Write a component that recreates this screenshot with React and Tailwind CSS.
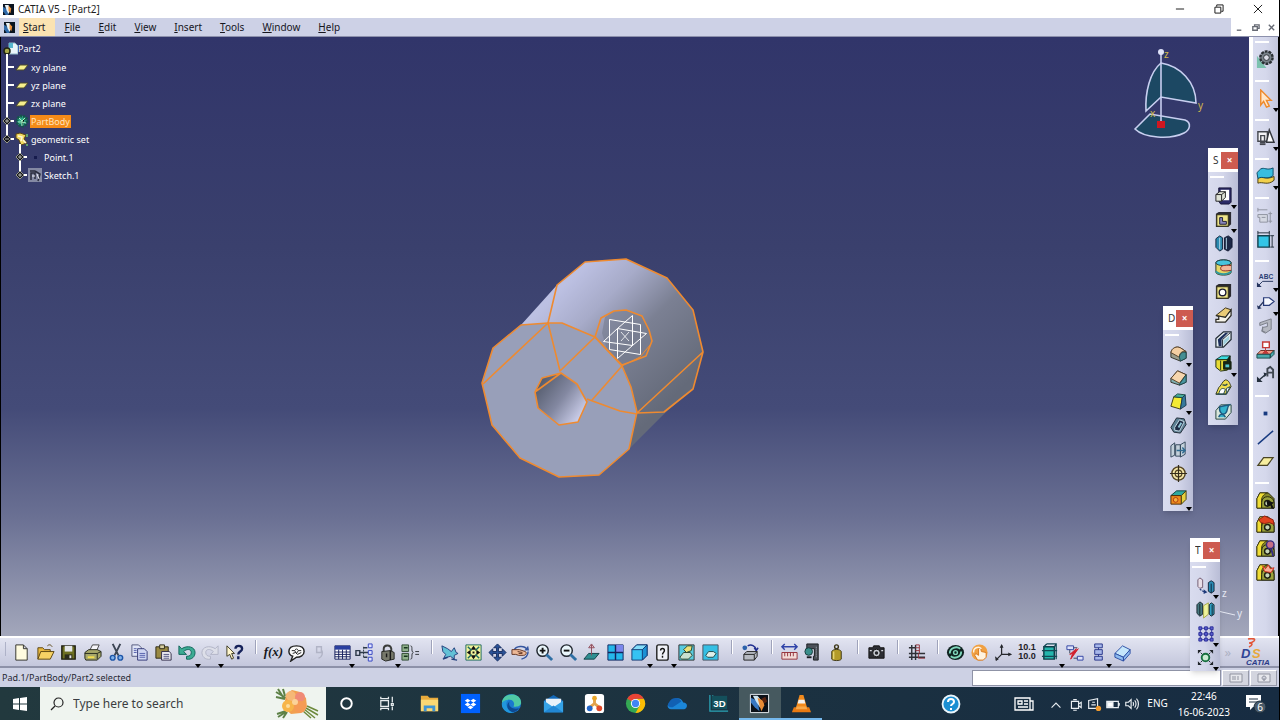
import React from "react";

// All toolbar glyphs live on a 20x20 grid
const GLYPHS = {
  newDoc: <path d="M4 2h8l4 4v12H4zM12 2v4h4" fill="#fffbe0" stroke="#33332a" />,
  open: (
    <>
      <path d="M2 17V5h5l2 2h6v3" fill="#e9b83f" stroke="#5b4310" />
      <path d="M2 17l3-8h14l-4 8z" fill="#f7d264" stroke="#5b4310" />
      <path d="M12 3c2-2 4-1 5 1" fill="none" stroke="#5b4310" />
    </>
  ),
  save: (
    <>
      <path d="M3 3h14v14H3z" fill="#6d6f22" stroke="#1c1c10" strokeWidth="1.5" />
      <path d="M6 3h8v6H6z" fill="#e3e6ea" />
      <path d="M6 12h8v5H6z" fill="#2b2b1c" />
      <path d="M11 13h2v3h-2z" fill="#e6e6e6" />
    </>
  ),
  print: (
    <>
      <path d="M7 8l3-6h7l-3 7z" fill="#f6f6fa" stroke="#444" />
      <path d="M2 10l4-3h9l4 2v5l-4 4H3l-1-2z" fill="#a7a86a" stroke="#25291c" />
      <path d="M2 11h13v6M15 11l4-2" fill="none" stroke="#25291c" />
      <path d="M5 14h7v2H5z" fill="#f4de4b" />
    </>
  ),
  cut: (
    <>
      <path d="M6 1l6 12M14 1L8 13" stroke="#3c4553" strokeWidth="2" fill="none" />
      <circle cx="6" cy="15.5" r="2.5" fill="#7fb2ec" stroke="#1e56a8" strokeWidth="1.5" />
      <circle cx="14" cy="15.5" r="2.5" fill="#7fb2ec" stroke="#1e56a8" strokeWidth="1.5" />
    </>
  ),
  copy: (
    <>
      <path d="M2 2h7l3 3v9H2z" fill="#dfe4f6" stroke="#54597d" />
      <path d="M8 6h7l3 3v9H8z" fill="#cfd6f2" stroke="#343a78" />
      <path d="M10 11h6M10 13h6M10 15h6M4 6h3M4 8h3M4 10h3" stroke="#5561ac" />
    </>
  ),
  paste: (
    <>
      <path d="M2 4h13v12H2z" fill="#9a8a43" stroke="#2e2a17" />
      <path d="M6 2h5v4H6z" fill="#d8d0a2" stroke="#2e2a17" />
      <path d="M8 9h8l2 2v7H8z" fill="#f1f0f4" stroke="#2e2a46" />
      <path d="M10 12h6M10 14h6M10 16h6" stroke="#4d4f7c" />
    </>
  ),
  undo: <path d="M2 3v9h8L7 9c3-3 8-3 8 1 0 3-2 4-5 4v3c6 1 9-3 9-7 0-6-8-8-14-4z" fill="#3cab93" stroke="#12655b" />,
  redo: <path d="M18 3v9h-8l3-3c-3-3-8-3-8 1 0 3 2 4 5 4v3c-6 1-9-3-9-7 0-6 8-8 14-4z" fill="#dddfe9" stroke="#b1b4c6" />,
  whatsThis: (
    <>
      <path d="M2 3l8 8H7l2 5-2 1-2-5-3 2z" fill="#fff6cc" stroke="#3d3a22" />
      <path d="M11 6c0-4 7-4 7 0 0 3-4 3-4 6M14 14v3" fill="none" stroke="#16225a" strokeWidth="2.5" />
    </>
  ),
  bubble: (
    <>
      <path d="M10 3c5 0 8 2 8 6s-4 6-8 6l-6 4 2-5c-3-1-4-3-4-5 0-4 3-6 8-6z" fill="#fbfbfb" stroke="#222" strokeWidth="1.5" />
      <path d="M5 8h3l2-2 2 2h3M6 11l3-1 2 2 4-2M8 8l2 3M12 8l-2 3" fill="none" stroke="#222" />
    </>
  ),
  ghost: <path d="M7 4h5v6H7zM12 7c2 3 1 8-3 9" fill="none" stroke="#b1b4c6" strokeWidth="1.5" />,
  table: (
    <>
      <path d="M2 3h16v14H2z" fill="#fff" stroke="#16205c" />
      <path d="M2 3h16v4H2z" fill="#2a3f9f" />
      <path d="M2 9.5h16M2 12h16M2 14.5h16M6 7v10M10 7v10M14 7v10" stroke="#16205c" />
    </>
  ),
  relations: (
    <>
      <path d="M1 8h4v5H1zM5 10h4M9 5h4M9 15h4M9 10h5" fill="none" stroke="#2e3a49" strokeWidth="1.5" />
      <path d="M9 4v12" stroke="#2e3a49" strokeDasharray="2 1" />
      <path d="M14 1h4v4h-4zM14 8h4v4h-4zM14 15h4v4h-4z" fill="#e2e4ff" stroke="#3444c2" />
    </>
  ),
  lock: (
    <>
      <path d="M6 10V6c0-4 7-5 8 0v4" fill="none" stroke="#3a3c3a" strokeWidth="2" />
      <path d="M4 9l9-1 4 2v7l-9 2-4-2z" fill="#77796b" stroke="#262824" />
      <path d="M13 8v10M9 11v4" stroke="#181818" strokeWidth="1.5" />
    </>
  ),
  equiv: (
    <>
      <path d="M1 2h7v7H1zM1 11h7v7H1z" fill="#8fb08a" stroke="#2f4b33" />
      <path d="M3 5h4M3 14h4" stroke="#16331c" strokeWidth="1.5" />
      <path d="M10 3c3 0 0 6 3 7-3 1 0 7-3 7M15 9h4M15 12h4" fill="none" stroke="#33373b" />
    </>
  ),
  fly: (
    <>
      <path d="M2 3l6 3 4 3 3-4 2 5 2 1-4 2v4l-4-3-7 2 2-4-3-3z" fill="#63c1d6" stroke="#23407d" />
      <path d="M3 17l5-2M12 17l6 1" stroke="#23407d" strokeWidth="1.5" />
    </>
  ),
  fitAll: (
    <>
      <path d="M2 2h16v16H2z" fill="#f2f39b" stroke="#1d6b62" />
      <path d="M10 3l3 4H7zM10 17l3-4H7zM3 10l4-3v6zM17 10l-4-3v6z" fill="#111" />
      <path d="M4 4l4 4M16 4l-4 4M4 16l4-4M16 16l-4-4" stroke="#1d6b62" strokeWidth="1.5" />
      <path d="M9 9h2v2H9z" fill="#111" />
    </>
  ),
  pan: (
    <path d="M10 1l4 4h-3v4h4V6l4 4-4 4v-3h-4v4h3l-4 4-4-4h3v-4H5v3l-4-4 4-4v3h4V5H6z" fill="#2a5298" stroke="#142c60" />
  ),
  rotate: (
    <>
      <path d="M3 8c2-5 11-6 14-1M18 9c0 5-3 7-7 8" fill="none" stroke="#3556a0" strokeWidth="1.5" />
      <path d="M14 8h5l-1-5z" fill="#3556a0" />
      <path d="M1 7h8l6 2c2 1 1 4-2 4H8l-3-1H1z" fill="#edb896" stroke="#603424" />
      <path d="M7 9l5 1M8 11h4" stroke="#603424" />
    </>
  ),
  zoomIn: (
    <>
      <circle cx="8" cy="8" r="6" fill="#eaf6fb" stroke="#20262e" strokeWidth="1.5" />
      <path d="M5 8h6M8 5v6" stroke="#111" strokeWidth="2" />
      <path d="M12 12l6 6" stroke="#2f6fa4" strokeWidth="3" />
    </>
  ),
  zoomOut: (
    <>
      <circle cx="8" cy="8" r="6" fill="#eaf6fb" stroke="#20262e" strokeWidth="1.5" />
      <path d="M5 8h6" stroke="#111" strokeWidth="2" />
      <path d="M12 12l6 6" stroke="#2f6fa4" strokeWidth="3" />
    </>
  ),
  normalView: (
    <>
      <path d="M2 17l5-6h11l-5 6z" fill="#2f8f92" stroke="#123f47" />
      <path d="M10 13V2M7 5l3-4 3 4z" fill="#e6c8cf" stroke="#8e4d5c" />
    </>
  ),
  multiView: (
    <>
      <path d="M2 2h16v16H2z" fill="#25b7ea" stroke="#15255e" />
      <path d="M10 2h8v8h-8z" fill="#7b86ec" />
      <path d="M10 2v16M2 10h16" stroke="#15255e" strokeWidth="1.5" />
    </>
  ),
  isoBox: (
    <>
      <path d="M2 7l5-5h11v11l-5 5H2z" fill="#35c3f3" stroke="#153b75" />
      <path d="M2 7l5-5h11l-5 5z" fill="#85defa" stroke="#153b75" />
      <path d="M13 7v11l5-5V2z" fill="#1b91d5" stroke="#153b75" />
    </>
  ),
  shadeHelp: (
    <>
      <rect x="4" y="2" width="12" height="16" rx="2" fill="#f1f2f8" stroke="#222" strokeWidth="1.5" />
      <path d="M8 8c0-3 4-3 4 0 0 2-2 2-2 4M10 13.5v2" fill="none" stroke="#111" strokeWidth="1.5" />
    </>
  ),
  hideShow: (
    <>
      <path d="M2 2h16v16H2z" fill="#57cbe0" stroke="#333" />
      <path d="M7 7l4-4h5l-1 5-5 2z" fill="#ece27b" stroke="#28442d" />
      <path d="M3 15l4-5h7l2 3-4 4H5z" fill="#c9e0cf" stroke="#28442d" />
    </>
  ),
  swapSpace: (
    <>
      <path d="M2 2h16v16H2z" fill="#35bfe4" stroke="#4c5260" />
      <path d="M5 13l3-4h5l3 2-3 4H7z" fill="#dff0ea" stroke="#1d4a4a" />
    </>
  ),
  turntable: (
    <>
      <circle cx="4" cy="5" r="2.5" fill="#2d62ac" />
      <path d="M7 3c4-2 8 0 9 4M14 5l2 3 2-3" fill="none" stroke="#1f2d8f" strokeWidth="1.5" />
      <path d="M3 12l3-3h11v5l-3 4H3zM3 12h11v6M14 12l3-3" fill="#b7bac2" stroke="#222" />
    </>
  ),
  measure: (
    <>
      <path d="M2 4h16M5 1L2 4l3 3M15 1l3 3-3 3" fill="none" stroke="#2f43a8" strokeWidth="1.5" />
      <path d="M2 10h16v7H2z" fill="#f3dcd8" stroke="#93303a" />
      <path d="M5 10v4M8 10v4M11 10v4M14 10v4" stroke="#93303a" />
    </>
  ),
  caliper: (
    <>
      <path d="M4 1h12v17h-5v-4h1V6H4z" fill="#4b5058" stroke="#191c20" />
      <circle cx="6" cy="9" r="4" fill="#3a8e8b" stroke="#16393a" />
      <path d="M4 15h5" stroke="#191c20" strokeWidth="2" />
      <path d="M14 4v12" stroke="#a9b0b8" strokeDasharray="1 1" />
    </>
  ),
  weight: (
    <>
      <circle cx="10" cy="4" r="2" fill="none" stroke="#3d3717" strokeWidth="1.5" />
      <path d="M5 9c1-3 9-3 10 0v8c-1 2-9 2-10 0z" fill="#b39b29" stroke="#3d3717" />
      <path d="M7 9v8" stroke="#e6d573" strokeWidth="1.5" />
    </>
  ),
  camera: (
    <>
      <path d="M2 5h4l1-2h6l1 2h4v11H2z" fill="#2c2d33" stroke="#111" />
      <circle cx="10" cy="10.5" r="4" fill="#c9ccd3" stroke="#111" />
      <circle cx="10" cy="10.5" r="1.8" fill="#25262b" />
      <path d="M3 8h2M15 8h2" stroke="#d8d9df" strokeWidth="1.5" />
    </>
  ),
  grid: (
    <>
      <path d="M5 2v16M9 2v16M2 11h17M2 15h17M2 5h7" stroke="#2e3036" strokeWidth="1.5" />
      <path d="M9 2h4v9M9 5h4M9 8h4M12 11v5h7" fill="none" stroke="#96333c" />
    </>
  ),
  update: (
    <>
      <ellipse cx="10" cy="10" rx="9" ry="8" fill="#0f2220" />
      <path d="M4 11c0-6 7-8 11-5M16 9c0 6-7 8-11 5" fill="none" stroke="#7fd6bb" strokeWidth="2" />
      <circle cx="10" cy="10" r="2" fill="none" stroke="#7fd6bb" strokeWidth="1.5" />
    </>
  ),
  manual: (
    <>
      <circle cx="10" cy="10" r="8.5" fill="#f0a042" />
      <path d="M8 18l-3-5 1-2 3 2V6l2-1 1 4 5 1v5l-3 3z" fill="#fff3df" stroke="#d9791c" />
      <path d="M4 10c-1-5 5-7 8-4" fill="none" stroke="#fff3df" strokeWidth="1.5" />
    </>
  ),
  axis: (
    <>
      <path d="M8 2v10h10M8 12l-6 6" fill="none" stroke="#25272c" strokeWidth="1.3" />
      <path d="M6 5l2-4 2 4zM15 10l4 2-4 2zM1 14l1 5 3-2z" fill="#25272c" />
    </>
  ),
  instance: (
    <>
      <path d="M3 4h11v13H3z" fill="#24b6ad" stroke="#0f3c48" strokeWidth="1.5" />
      <path d="M1 8h16M1 14h16M6 1h10v16M3 4l3-3M14 4l2-3" fill="none" stroke="#134955" strokeWidth="1.3" />
    </>
  ),
  broken: (
    <>
      <path d="M2 3h7v4H2zM13 14h6v4h-6z" fill="#dfe3fa" stroke="#3143a3" />
      <path d="M5 7v4M9 5h4M9 16h4" fill="none" stroke="#3b4358" />
      <path d="M14 6l-8 11 2-6-3 1 7-6-1 3z" fill="#d2202c" stroke="#d2202c" />
    </>
  ),
  stack: (
    <>
      <path d="M6 1h8v4H6zM6 7h8v5H6zM6 14h8v4H6z" fill="#a7b7ea" stroke="#27368a" />
      <path d="M10 5v2M10 12v2" stroke="#27368a" />
    </>
  ),
  eraser: (
    <>
      <path d="M2 11l8-8 8 4-7 8z" fill="#c5e6fb" stroke="#2c4ea4" />
      <path d="M2 11v4l9 4v-4zM11 15v4l7-8V7z" fill="#8fbcee" stroke="#2c4ea4" />
    </>
  ),
  // right hand column
  gear: (
    <>
      <path d="M1 19V6l10 13z" fill="#7cc1ae" />
      <circle cx="11" cy="8" r="6.5" fill="#79828a" stroke="#2a2f33" strokeWidth="2.5" strokeDasharray="3 1" />
      <circle cx="11" cy="8" r="3" fill="#d9dbe5" stroke="#2a2f33" />
    </>
  ),
  select: <path d="M5 1l11 11h-5l3 6-3 1-3-6-3 4z" fill="#ffe7c9" stroke="#ef8a2b" strokeWidth="1.5" />,
  sketcher: (
    <>
      <path d="M2 4h10v10H2zM5 8h4v7H5z" fill="#f4f4f7" stroke="#45484f" strokeWidth="1.5" />
      <path d="M14 2l5 13h-8z" fill="#fff" stroke="#33363c" strokeWidth="1.5" />
      <path d="M4 17h6" stroke="#45484f" strokeWidth="2" />
    </>
  ),
  surfaces: (
    <>
      <path d="M2 12c5-3 8 2 17-2v4c-7 6-12 1-17 3z" fill="#f2d04b" stroke="#473b10" />
      <path d="M1 6l4-4c4-2 6 2 13-1v8c-6 5-11 0-16 3z" fill="#39bddf" stroke="#0f4c66" />
    </>
  ),
  ghostPlanes: (
    <path d="M2 4h10M2 9h10v8H4v-5H2zM6 12h4M15 6v12M13 8h4M13 16h4M2 2v4" fill="#d5d8e2" stroke="#8e929f" />
  ),
  constraint: (
    <>
      <path d="M2 6h12v12H2z" fill="#33c5e6" stroke="#14414e" strokeWidth="1.5" />
      <path d="M2 1v4M14 1v4M2 3h12M15 6h4M15 18h4M17 6v12" fill="none" stroke="#222d3a" />
    </>
  ),
  abc: (
    <>
      <path d="M2 18l5-5h11" fill="none" stroke="#23335c" />
      <path d="M1 14v5h5z" fill="#23335c" />
      <text x="3" y="10" fontSize="7" fontWeight="700" fontFamily="Liberation Sans, sans-serif" fill="#2c3f74">
        ABC
      </text>
    </>
  ),
  flag: (
    <>
      <path d="M8 5h6l5 4-5 4H8z" fill="#f6f8ff" stroke="#273a78" strokeWidth="1.3" />
      <path d="M8 9l-5 6" fill="none" stroke="#23335c" strokeWidth="1.3" />
      <path d="M1 13l1 4 4-1z" fill="#23335c" />
    </>
  ),
  rough: (
    <>
      <path d="M4 6l12-4v11l-6 4-4-2 1-4 5-1V6L4 9z" fill="#b5b8c1" stroke="#797d88" />
      <path d="M7 10v5l3 1" fill="none" stroke="#797d88" />
    </>
  ),
  datum: (
    <>
      <path d="M7 1h7v6H7z" fill="#fff" stroke="#c33a38" strokeWidth="1.5" />
      <path d="M1 14l4-4h14l-4 4z" fill="#f39b86" stroke="#6e2e22" />
      <path d="M10 7v6M7 13l3-3 3 3z" fill="#c33a38" stroke="#c33a38" />
      <path d="M1 14h14v4H1zM15 14l4-4v4l-4 4z" fill="#4aa9ab" stroke="#1c4b4d" />
    </>
  ),
  textLeader: (
    <>
      <path d="M3 16l7-6" stroke="#242f3c" strokeWidth="1.5" />
      <path d="M1 12v6h6zM8 8l4 1-3 4z" fill="#242f3c" />
      <path d="M12 12V4l3-2 3 3v9M12 8h6" fill="none" stroke="#3e4650" strokeWidth="2" />
    </>
  ),
  point: <path d="M8 8h4v4H8z" fill="#173a80" />,
  line: <path d="M2 17L18 3" stroke="#173a80" strokeWidth="1.5" />,
  plane: <path d="M2 14l6-8h10l-6 8z" fill="#f7ee9f" stroke="#4a4524" strokeWidth="1.3" />,
  // sketch based features
  pad: (
    <>
      <path d="M5 2h13v15l-2 2H7l-2-3z" fill="#2b2a66" stroke="#151438" />
      <path d="M7 4h9v11H7z" fill="#fff" />
      <path d="M2 9l4-3h6v6l-4 4H2zM2 9h6v7M8 9l4-3" fill="#dfe3d7" stroke="#222" />
    </>
  ),
  pocket: (
    <>
      <path d="M2 4l3-2h13v13l-3 3H2z" fill="#2b2a33" />
      <path d="M3 5h12v12H3z" fill="#efe58a" stroke="#333017" />
      <path d="M6 8h3v4h4v3H6z" fill="#8785bd" stroke="#1d1c34" />
    </>
  ),
  shaft: (
    <>
      <path d="M2 5l4-3 3 2v12l-3 2-4-4z" fill="#2b8bb0" stroke="#13263f" />
      <path d="M11 4l4-2 4 3v9l-4 4-4-2z" fill="#1c2847" stroke="#101730" />
      <path d="M6 4v12M13 4v12" stroke="#b7d8e8" />
    </>
  ),
  groove: (
    <>
      <path d="M2 5c0-4 16-4 16 0v10c0 4-16 4-16 0z" fill="#e6d667" stroke="#23331f" />
      <ellipse cx="10" cy="5" rx="8" ry="3" fill="#46c3dc" stroke="#153c48" />
      <path d="M18 8c-7-1-11 0-11 3s5 3 11 2" fill="#f1b498" stroke="#8a2620" />
      <path d="M2 14c3 4 13 4 16 0" fill="none" stroke="#2f9aa0" strokeWidth="2" />
    </>
  ),
  hole: (
    <>
      <path d="M2 4l3-2h13v13l-3 3H2z" fill="#2a2930" />
      <path d="M3 5h12v12H3z" fill="#efe58a" stroke="#333017" />
      <circle cx="9" cy="11" r="3.5" fill="#fff" stroke="#1d1c34" strokeWidth="1.5" />
    </>
  ),
  rib: (
    <>
      <path d="M2 10l10-8 6 2-6 8z" fill="#eacb76" stroke="#3a2f14" />
      <path d="M2 10l10 2 6-8v6l-6 7H2v-3h3v-3z" fill="#f6f4ea" stroke="#2a2a24" strokeWidth="1.3" />
    </>
  ),
  slot: (
    <>
      <path d="M2 9l8-7h8v8l-8 8H2z" fill="#e5eef0" stroke="#222b35" strokeWidth="1.3" />
      <path d="M4 10l8-7h3l-7 7v7H5z" fill="#1d2f5c" />
      <path d="M9 10l8-7M9 10v8" fill="none" stroke="#222b35" />
      <path d="M10 11l6-5v4l-6 6z" fill="#9fd0dc" />
    </>
  ),
  combine: (
    <>
      <path d="M2 6l6-4h9l-3 4z" fill="#3ddde0" stroke="#103c3e" />
      <path d="M2 6h12v11l-7 1-5-4z" fill="#e7da35" stroke="#1c2b10" />
      <path d="M10 8h8v8h-8zM14 6l3-4v6h-3z" fill="#182513" stroke="#182513" />
      <path d="M12 11h4v3h-4z" fill="#54c6cc" />
      <path d="M7 7v10" stroke="#1c2b10" />
    </>
  ),
  loft: (
    <>
      <path d="M2 17l3-7c2-1 4-7 7-8 4 0 5 5 6 7l-5 8z" fill="#eedd4e" stroke="#303416" />
      <path d="M5 17c1-6 4-7 7-5l-2 5zM13 11l4-2-4 8z" fill="#fff" stroke="#26494d" />
      <path d="M2 17h11M9 7c2 1 4 1 5-1" fill="none" stroke="#26494d" strokeWidth="1.5" />
    </>
  ),
  removedLoft: (
    <>
      <path d="M2 9l5-6h11v8l-6 7H2z" fill="#d9e7dc" stroke="#23423c" />
      <path d="M6 5c-1 6 3 9 6 7s1-6 4-9l-5 1zM5 16c1-4 5-4 7 0" fill="#35b2cd" stroke="#1f5b80" strokeWidth="1.5" />
    </>
  ),
  // dress-up
  fillet: (
    <>
      <path d="M2 9c1-5 6-7 10-5l6 4v7l-6 3-10-4z" fill="#9a9d8c" stroke="#303028" />
      <path d="M2 9c1-5 6-7 10-5l6 4c-4-1-7 1-7 6z" fill="#f4cfa3" stroke="#5a4128" />
      <path d="M11 14c0-4 3-6 7-5v6l-6 3z" fill="#438e93" stroke="#20484b" />
    </>
  ),
  chamfer: (
    <>
      <path d="M2 11l7-8 9 4v8l-7 3-9-3z" fill="#7eaeb0" stroke="#303028" />
      <path d="M2 11l7-8 9 4-7 9z" fill="#f6d6ae" stroke="#5a4128" />
      <path d="M11 17l7-10v8l-7 3z" fill="#4996a0" stroke="#20484b" />
    </>
  ),
  draft: (
    <>
      <path d="M2 15l3-10 9 1-2 12z" fill="#f3ea33" stroke="#3d3a10" />
      <path d="M5 5l4-3 8 1-3 3z" fill="#46ad9c" stroke="#1c4c44" />
      <path d="M14 6l3-3 1 11-6 4z" fill="#35799b" stroke="#1a3a4e" />
    </>
  ),
  shell: (
    <>
      <path d="M2 12l6-10 8 1 2 6-6 9-7-1z" fill="#5e8195" stroke="#1f2a36" />
      <path d="M6 12l5-8 5 2-5 10-5-1z" fill="#1d2b45" stroke="#c8dde6" />
      <path d="M10 12l3-5" stroke="#8fc4d6" strokeWidth="2" />
    </>
  ),
  thickness: (
    <>
      <path d="M2 6l4-3v13l-4 2zM7 5h5v12H7zM12 5l5-3v13l-5 3z" fill="#c3d0da" stroke="#35495c" />
      <path d="M8 11h9M14 8l3 3-3 3" fill="none" stroke="#2f6b91" strokeWidth="1.5" />
    </>
  ),
  thread: (
    <>
      <circle cx="10" cy="10" r="7" fill="#f3e6a8" stroke="#564522" strokeWidth="1.5" />
      <circle cx="10" cy="10" r="3.5" fill="none" stroke="#564522" strokeWidth="1.3" />
      <path d="M10 1v18M1 10h18" stroke="#332b1b" strokeWidth="1.3" />
    </>
  ),
  removeFace: (
    <>
      <path d="M2 8l6-5h10l-5 5z" fill="#2faaa0" stroke="#15413e" />
      <path d="M2 8h11v9H2z" fill="#ee8a1c" stroke="#4c2b0a" />
      <path d="M13 8l5-5v9l-5 5z" fill="#e5d03e" stroke="#433c10" />
      <circle cx="7" cy="12.5" r="2.5" fill="#f6b13c" stroke="#b13a12" />
    </>
  ),
  // transformations
  translate: (
    <>
      <path d="M2 4l2-2 3 2v8l-3 1-2-2z" fill="#e9dfe8" stroke="#70586f" />
      <path d="M4 14l5 3" fill="none" stroke="#1f3a7a" strokeWidth="1.3" strokeDasharray="2 1" />
      <path d="M8 14l4 3-4 2z" fill="#1f3a7a" />
      <path d="M13 7l3-2 3 2v9l-3 2-3-2z" fill="#2b8cb5" stroke="#14263c" />
      <path d="M16 8v10" stroke="#14263c" />
    </>
  ),
  mirror: (
    <>
      <path d="M1 5l3-3 3 2v11l-3 2-3-3z" fill="#46787f" stroke="#16262e" />
      <path d="M8 6l5-3v12l-5 4z" fill="#eef39c" stroke="#a5a84a" />
      <path d="M14 5l2-2 3 2v10l-3 2-2-2z" fill="#2f9fc4" stroke="#16262e" />
      <path d="M4 4v12M17 5v11" stroke="#16262e" />
    </>
  ),
  pattern: (
    <path
      d="M3 3h3v3H3zM9 3h3v3H9zM15 3h3v3h-3zM3 9h3v3H3zM9 9h3v3H9zM15 9h3v3h-3zM3 15h3v3H3zM9 15h3v3H9zM15 15h3v3h-3zM6 4.500h3M12 4.500h3M6 10.500h3M12 10.500h3M6 16.500h3M12 16.500h3M4.500 6v3M4.500 12v3M10.500 6v3M10.500 12v3M16.500 6v3M16.500 12v3"
      fill="#5a5fd0"
      stroke="#2c2f99"
    />
  ),
  scale: (
    <>
      <circle cx="10" cy="10" r="4" fill="#c9ecd2" stroke="#17703f" strokeWidth="2" />
      <path d="M2 2h4L2 6zM18 2h-4l4 4zM2 18h4l-4-4zM18 18h-4l4-4z" fill="#20242a" />
      <path d="M3 3l4 4M17 3l-4 4M3 17l4-4M17 17l-4-4" stroke="#20242a" strokeDasharray="2 1" />
    </>
  ),
};

// the four catalogue blocks share one body and differ in the mark on top
function CatalogBlock({ mark }) {
  return (
    <>
      <path d="M1 8l3-6h9l6 6v10H1z" fill="#85872a" stroke="#23240c" />
      <path d="M1 8l3-6h8c-4 1-7 5-6 10v6H1z" fill="#f0dd36" stroke="#3f3b10" />
      <path d="M6 18v-6c0-8 12-8 13 0v6z" fill="#9aa23c" stroke="#23240c" />
      <circle cx="12" cy="13" r="3" fill="#c7d6b8" stroke="#1c1d10" strokeWidth="1.5" />
      {mark}
    </>
  );
}
GLYPHS.blockPick = <CatalogBlock mark={<path d="M11 10l8 2-2 2 2 5-3-1-1-3-3 1z" fill="#111" />} />;
GLYPHS.blockRed = <CatalogBlock mark={<path d="M3 5l6-4 9 4 1 5-5-2-5 1-4-1z" fill="#e1421e" stroke="#8f1f10" />} />;
GLYPHS.blockLens = (
  <CatalogBlock
    mark={
      <>
        <circle cx="15" cy="6" r="4" fill="#c66f86" stroke="#342a80" strokeWidth="1.5" />
        <path d="M16 10l2 8" stroke="#342a80" strokeWidth="2" />
      </>
    }
  />
);
GLYPHS.blockCut = <CatalogBlock mark={<path d="M7 3l3 3 3-4 2 4 4-1-3 5-7-1z" fill="#f7b098" stroke="#d02b1c" />} />;

function Glyph({ name }) {
  return (
    <svg viewBox="0 0 20 20" className="h-[19px] w-[19px]" fill="none" aria-hidden="true">
      {GLYPHS[name]}
    </svg>
  );
}

// "+" at the end of a name means the tool has a fly-out menu
function ToolButton({ id, className }) {
  const menu = id.endsWith("+");
  const name = menu ? id.slice(0, -1) : id;
  return (
    <button type="button" aria-label={name} className={`relative flex items-center justify-center ${className}`}>
      {name === "fx" && <span className="font-['Liberation_Serif',serif] text-[13px] font-bold italic text-[#16181d]">f(x)</span>}
      {name === "decimals" && (
        <span className="text-center font-['Liberation_Sans',sans-serif] text-[9px] font-bold leading-[9px] text-[#1d2027]">
          10.1
          <br />
          10.0
        </span>
      )}
      {GLYPHS[name] && <Glyph name={name} />}
      {menu && (
        <span className="absolute -bottom-0.5 -right-0.5 border-x-[3px] border-t-4 border-x-transparent border-t-black" />
      )}
    </button>
  );
}

const BOTTOM_GROUPS = [
  { width: "w-[236px]", tools: ["newDoc", "open", "save", "print", "cut", "copy", "paste", "undo+", "redo+", "whatsThis"] },
  { width: "w-[160px]", tools: ["fx", "bubble", "ghost", "table+", "relations", "lock+", "equiv"] },
  {
    width: "w-[284px]",
    tools: ["fly", "fitAll", "pan", "rotate", "zoomIn", "zoomOut", "normalView", "multiView", "isoBox+", "shadeHelp+", "hideShow", "swapSpace"],
  },
  { width: "w-6", tools: ["turntable"] },
  { width: "w-[70px]", tools: ["measure", "caliper", "weight"] },
  { width: "w-6", tools: ["camera"] },
  { width: "w-6", tools: ["grid"] },
  { width: "w-[190px]", tools: ["update", "manual", "axis", "decimals", "instance+", "broken", "stack+", "eraser"] },
];

const SIDE_GROUPS = [
  ["gear"],
  ["select+"],
  ["sketcher+"],
  ["surfaces+"],
  ["ghostPlanes", "constraint"],
  ["abc+", "flag+", "rough", "datum", "textLeader"],
  ["point", "line", "plane"],
  ["blockPick", "blockRed", "blockLens", "blockCut"],
];

const MENUS = ["Start", "File", "Edit", "View", "Insert", "Tools", "Window", "Help"];

function CatiaMark({ className }) {
  return (
    <svg viewBox="0 0 12 12" className={className} aria-hidden="true">
      <path d="M0 0h12v12H0z" fill="#0b1420" />
      <path d="M0 3l5 3 1 6H3L0 8z" fill="#2f69a8" />
      <path d="M2 1h4l2 5-2 5-2-4z" fill="#e8f2f7" />
      <path d="M6 2l3 3-1 5-2-3z" fill="#f0923a" />
    </svg>
  );
}

function TitleBar() {
  return (
    <header className="flex h-[18px] shrink-0 items-center bg-white pl-[3px] pr-0.5 text-[#1f1f1f]">
      <CatiaMark className="h-[11px] w-[11px]" />
      <h1 className="ml-1 font-['Noto_Sans',sans-serif] text-[10px] leading-none">CATIA V5 - [Part2]</h1>
      <div className="ml-auto flex">
        {[
          ["Minimize", "M1 5.500h9"],
          ["Restore", "M1 3.500h6.500v6.500H1zM3 3V1h7v7H8"],
          ["Close", "M1 1l9 9M10 1l-9 9"],
        ].map(([label, d]) => (
          <button key={label} type="button" aria-label={label} className="flex h-[18px] w-[39px] items-center justify-center">
            <svg viewBox="0 0 11 11" className="h-[10px] w-[10px]">
              <path d={d} fill="none" stroke="#222" strokeWidth="1.1" />
            </svg>
          </button>
        ))}
      </div>
    </header>
  );
}

function MenuBar() {
  return (
    <nav className="flex h-[19px] shrink-0 items-stretch border-b border-[#8c90ac] bg-[#cdd1e6] pl-1 font-['Noto_Sans',sans-serif] text-[10px] text-[#16161e]">
      <span className="flex w-[15px] items-center">
        <CatiaMark className="h-[11px] w-[11px]" />
      </span>
      {MENUS.map((m) => (
        <button
          key={m}
          type="button"
          className={`leading-none ${m === "Start" ? "bg-[#fbe3b2] pl-1 pr-[10px]" : "px-[9px]"}`}
        >
          <span className="underline underline-offset-1">{m[0]}</span>
          {m.slice(1)}
        </button>
      ))}
      <div className="ml-auto flex bg-white">
        {[
          ["Minimize document", "M2 8h5"],
          ["Restore document", "M2 4h5v4H2zM4 4V2h5v4H7"],
          ["Close document", "M2 2l6 6M8 2L2 8"],
        ].map(([label, d]) => (
          <button key={label} type="button" aria-label={label} className="flex w-4 items-center justify-center">
            <svg viewBox="0 0 10 10" className="h-[9px] w-[9px]">
              <path d={d} fill="none" stroke="#666a74" strokeWidth="1.5" />
            </svg>
          </button>
        ))}
      </div>
    </nav>
  );
}

function PlaneIcon() {
  return (
    <svg viewBox="0 0 14 8" className="h-2 w-[14px]" aria-hidden="true">
      <path d="M1 7l4-5h8L9 7z" fill="#f6ef8c" stroke="#4d4b2c" />
    </svg>
  );
}

function BodyIcon() {
  return (
    <svg viewBox="0 0 14 14" className="h-[14px] w-[14px]" aria-hidden="true">
      <circle cx="7" cy="7" r="5" fill="#2fa584" stroke="#12564a" strokeWidth="3" strokeDasharray="2 1" />
      <path d="M4 4l3 3M10 4L7 7v5M3 8h4l4 1" stroke="#a9f0c3" />
    </svg>
  );
}

function GeoSetIcon() {
  return (
    <svg viewBox="0 0 14 14" className="h-[14px] w-[14px]" aria-hidden="true">
      <path d="M1 2l4-1 6 2-2 4 3 4-6 2-2-5-3-2z" fill="#f0d860" stroke="#5d4618" />
      <path d="M3 4l4 1-1 4M8 8l3 3" fill="none" stroke="#fff7d8" strokeWidth="1.5" />
      <path d="M12 2v3M11 13h2" stroke="#6fc36d" strokeWidth="1.5" />
    </svg>
  );
}

function PartIcon() {
  return (
    <svg viewBox="0 0 15 14" className="h-[14px] w-[15px]" aria-hidden="true">
      <path d="M6 1h6l3 3v8H6z" fill="#eaf6fb" stroke="#8fb7c7" />
      <path d="M6 1h4v5H6z" fill="#57b7cf" />
      <circle cx="4" cy="9" r="3" fill="#a7a94a" stroke="#202414" strokeWidth="1.5" />
    </svg>
  );
}

function SketchIcon() {
  return (
    <svg viewBox="0 0 14 14" className="h-[14px] w-[14px]" aria-hidden="true">
      <path d="M0 0h14v14H0z" fill="#8489a3" />
      <path d="M3 12V5h4v6M7 3l5 3-2 7M2 3h5" fill="none" stroke="#2a2d3c" strokeWidth="1.5" />
      <path d="M4 8h3M9 6l2 5" stroke="#f0f1f6" />
    </svg>
  );
}

function Knob({ open }) {
  return (
    <svg viewBox="0 0 8 8" className="z-10 h-2 w-2 shrink-0" aria-hidden="true">
      <path d="M4 0l4 4-4 4-4-4z" fill="#11121a" stroke="#b5b79a" strokeWidth="0.800" />
      <path d={open ? "M2 4h4" : "M2 4h4M4 2v4"} stroke="#d9dccb" strokeWidth="0.800" />
    </svg>
  );
}

function TreeRow({ icon, label, node, open, active }) {
  return (
    <div className="flex h-[18px] items-center">
      {node ? <Knob open={open} /> : <span className="w-1" />}
      <span className={`h-0.5 bg-white ${node ? "w-[3px]" : "w-[7px]"}`} />
      <span className="flex w-4 shrink-0 justify-center">{icon}</span>
      <span className={active ? "bg-[#f58b18] px-px leading-[13px] text-[#ffe3bd]" : "px-px leading-[13px]"}>{label}</span>
    </div>
  );
}

function SpecTree() {
  return (
    <div className="relative z-10 w-fit pl-0.5 pt-[3px] font-['Noto_Sans',sans-serif] text-[9px] text-white">
      <div className="flex h-[18px] items-center">
        <PartIcon />
        <span>Part2</span>
      </div>
      <div className="relative">
        <span className="absolute -top-1 bottom-[46px] left-[3px] w-0.5 bg-white" />
        <TreeRow icon={<PlaneIcon />} label="xy plane" />
        <TreeRow icon={<PlaneIcon />} label="yz plane" />
        <TreeRow icon={<PlaneIcon />} label="zx plane" />
        <TreeRow icon={<BodyIcon />} label="PartBody" node active />
        <TreeRow icon={<GeoSetIcon />} label="geometric set" node open />
        <div className="relative ml-[13px]">
          <span className="absolute -top-1 bottom-[9px] left-[3px] w-0.5 bg-white" />
          <TreeRow icon={<span className="h-[3px] w-[3px] bg-[#161b4d]" />} label="Point.1" node />
          <TreeRow icon={<SketchIcon />} label="Sketch.1" node />
        </div>
      </div>
    </div>
  );
}

function PartModel() {
  return (
    <svg viewBox="475 187 300 300" className="h-[300px] w-[300px]" role="img" aria-label="Part2">
      <defs>
        <linearGradient id="side" gradientUnits="userSpaceOnUse" x1="560" y1="290" x2="670" y2="400">
          <stop offset="0" stopColor="#bcc0e2" />
          <stop offset="0.250" stopColor="#a7abc9" />
          <stop offset="0.550" stopColor="#7b8093" />
          <stop offset="1" stopColor="#646a79" />
        </linearGradient>
        <linearGradient id="bore" gradientUnits="userSpaceOnUse" x1="541" y1="384" x2="582" y2="414">
          <stop offset="0" stopColor="#596072" />
          <stop offset="0.500" stopColor="#8388a1" />
          <stop offset="1" stopColor="#c9cce8" />
        </linearGradient>
      </defs>
      <path
        d="M493 348L521 325L557 285L585 262L626 259L667 278L693 310L703 352L693 389L666 412L629 449L560 420z"
        fill="url(#side)"
      />
      <path
        d="M482 383L493 348L521 325L548 323L562 323L595 337L622 366L631 387L637 412L629 449L599 475L559 477L520 458L492 425z"
        fill="#989fb9"
      />
      <path d="M561 373L542 378L535 392L538 408L559 425L578 422L587 402L577 384z" fill="url(#bore)" />
      <path d="M602 333L605 317L614 311L626 310L642 316L649 330L652 341L646 356L633 361L620 360L607 349z" fill="#777d90" fillOpacity="0.600" />
      <g fill="none" stroke="#ee8a30" strokeWidth="1.600" strokeLinejoin="round">
        <path d="M482 383L493 348L521 325L548 323L562 323L595 337L622 366L631 387L637 412L629 449L599 475L559 477L520 458L492 425z" />
        <path d="M548 323L557 285L585 262L626 259L667 278L693 310L703 352L693 389L664 412L637 413L703 352" />
        <path d="M561 373L542 378L535 392L538 408L559 425L578 422L587 402L577 384zM561 373L535 392" />
        <path d="M483 384L548 323L560 371L595 337M622 366L592 400M587 399L620 411L637 414" />
        <path d="M595 337L601 318L614 311L626 310L642 316L649 330L652 341L646 356L633 361L622 365L607 350z" />
        <path d="M622 366L640 357L650 345" strokeWidth="1" />
      </g>
      <g fill="none" stroke="#fff">
        <path d="M609.500 319.500L640.500 324.500V354.500L609.500 349.500z" />
        <path d="M603.500 341.500L617.500 328.500L646.500 333.500L632.500 345.500z" />
        <path d="M632.500 315.500V345.500L617.500 358.500V328.500z" />
        <path d="M621 332l8 9M629 332l-8 9" strokeWidth="0.800" />
      </g>
    </svg>
  );
}

function Compass() {
  return (
    <svg viewBox="1125 45 90 95" className="absolute right-[34px] top-2 h-[95px] w-[90px]" aria-label="Compass">
      <g fill="#1c4863" stroke="#c8cff0" strokeWidth="1.600">
        <path d="M1161 63C1180 66 1196 82 1196 103L1161 97L1146 111C1145 92 1150 72 1161 63z" />
        <path d="M1135 129L1150 114L1185 120C1192 123 1190 130 1184 133C1170 140 1144 138 1135 129z" />
        <path d="M1161 52v72" />
      </g>
      <circle cx="1161" cy="52" r="3" fill="#dfe3fa" />
      <path d="M1157 121h8v7h-8z" fill="#cf1720" />
      <g fontFamily="Noto Sans, sans-serif" fontSize="10" fill="#cfb84c">
        <text x="1164" y="58">z</text>
        <text x="1198" y="109">y</text>
        <text x="1150" y="117">x</text>
      </g>
    </svg>
  );
}

function ScreenAxis() {
  return (
    <svg viewBox="0 0 36 36" className="absolute bottom-3 right-1 h-9 w-9" aria-hidden="true">
      <path d="M0 21l26 6" stroke="#e6e8f2" />
      <g fontFamily="Noto Sans, sans-serif" fontSize="10" fill="#e6e8f2">
        <text x="13" y="9">z</text>
        <text x="28" y="29">y</text>
      </g>
    </svg>
  );
}

function Palette({ title, tools, className }) {
  return (
    <section className={`absolute z-20 w-[30px] bg-gradient-to-r from-[#d9dcef] via-[#d3d6ea] to-[#b9bdd6] pb-0.5 shadow-md ${className}`}>
      <div className="flex h-6 items-center justify-end bg-white font-['Noto_Sans',sans-serif] text-[10px] text-[#333]">
        <span className="w-2 overflow-hidden">{title}</span>
        <button type="button" aria-label="Close" className="flex h-[17px] w-[17px] items-center justify-center bg-[#cd5b50] text-[10px] font-bold leading-none text-white">
          ×
        </button>
      </div>
      <div className="mb-[5px] ml-0.5 mt-1 h-0.5 w-[14px] bg-white" />
      <div className="flex flex-col items-center">
        {tools.map((t) => (
          <ToolButton key={t} id={t} className="h-6 w-6" />
        ))}
      </div>
    </section>
  );
}

function SideBar() {
  return (
    <aside className="w-[30px] shrink-0 border-l-4 border-r border-l-white border-r-black bg-gradient-to-r from-[#d9dcef] via-[#d5d8ec] to-[#c3c6dc] pt-1">
      {SIDE_GROUPS.map((group, i) => (
        <div key={i} className="mb-2">
          <div className="mb-1 ml-0.5 h-0.5 w-[14px] bg-white" />
          <div className="flex flex-col pb-px">
            {group.map((t) => (
              <ToolButton key={t} id={t} className="h-6 w-6" />
            ))}
          </div>
        </div>
      ))}
    </aside>
  );
}

function DassaultLogo() {
  return (
    <svg viewBox="0 0 38 28" className="h-7 w-[38px]" aria-label="DS CATIA">
      <path d="M9 1c5-1 8 0 6 2-1 1-3 2-5 2 4 0 4 2 0 4" fill="none" stroke="#e2563a" strokeWidth="1.600" />
      <g fontFamily="Liberation Sans, sans-serif" fontStyle="italic">
        <text x="2" y="20" fontSize="13" fontWeight="700" fill="#2f4596">D</text>
        <text x="13" y="20" fontSize="13" fontWeight="700" fill="#e6a83a">S</text>
        <text x="7" y="27" fontSize="8" fontWeight="700" fill="#2b3b87">CATIA</text>
      </g>
    </svg>
  );
}

function BottomBar() {
  return (
    <div className="flex h-8 shrink-0 items-stretch border-b-2 border-t-2 border-b-[#8d91a8] border-t-white bg-gradient-to-b from-[#e2e4f1] to-[#c4c7dc] pl-[5px] pr-0.5">
      <span className="mt-1 h-[14px] w-[5px] border-l border-[#aeb2c8]" />
      {BOTTOM_GROUPS.map((g, i) => (
        <React.Fragment key={i}>
          {i > 0 && (
            <span className="flex w-4 shrink-0 justify-center pl-1">
              <span className="mt-0.5 h-[14px] w-0.5 border-l border-[#9fa3bb] bg-white" />
            </span>
          )}
          <div className={`flex shrink-0 ${g.width}`}>
            {g.tools.map((t) => (
              <ToolButton key={t} id={t} className="min-w-0 flex-1" />
            ))}
          </div>
        </React.Fragment>
      ))}
      <div className="ml-auto flex items-center gap-2">
        <span className="font-['Noto_Sans',sans-serif] text-[13px] leading-none text-[#aeb1c3]">»</span>
        <DassaultLogo />
      </div>
    </div>
  );
}

function StatusBar() {
  return (
    <div className="flex h-[19px] shrink-0 items-center bg-[#cdd1e4] px-0.5 font-['Noto_Sans',sans-serif] text-[9px] text-[#272833]">
      <output className="leading-none">Pad.1/PartBody/Part2 selected</output>
      <input aria-label="Power input" className="ml-auto h-4 w-[249px] border border-[#8f93a6] bg-white px-1 outline-none" />
      {["Command list", "Knowledge"].map((label, i) => (
        <button key={label} type="button" aria-label={label} className="ml-px flex h-4 w-[27px] items-center justify-center border border-b-[#9699a8] border-l-white border-r-[#9699a8] border-t-white bg-[#d3d5df]">
          <svg viewBox="0 0 14 10" className="h-[10px] w-[14px]">
            <path d={i ? "M1 1h12v8H1zM7 3a2 2 0 1 0 .1 0M7 5v3" : "M1 1h12v8H1zM3 4h4M3 6h4M9 3v4"} fill="#e6e7ec" stroke="#9093a0" />
          </svg>
        </button>
      ))}
    </div>
  );
}

const APPS = {
  Cortana: <circle cx="12" cy="12" r="5.5" fill="none" stroke="#fff" strokeWidth="2" />,
  "Task View": <path d="M5 5v2h8V5M5 19v-2h8v2M5 9h8v6H5zM17 5v6M17 15v4M16 12h2v2h-2z" fill="none" stroke="#e9eef0" strokeWidth="1.3" />,
  "File Explorer": (
    <>
      <path d="M3 4h7l2 2h9v14H3z" fill="#e8ab3c" />
      <path d="M3 8h18v12H3z" fill="#fbd873" />
      <path d="M6 20v-6h12v6h-3v-3H9v3z" fill="#3f95d4" />
    </>
  ),
  Dropbox: (
    <>
      <path d="M2 2h20v20H2z" fill="#0061fe" />
      <path d="M9 7l3 2-3 2-3-2zM15 7l3 2-3 2-3-2zM9 11l3 2-3 2-3-2zM15 11l3 2-3 2-3-2zM12 14l3 2-3 2-3-2z" fill="#fff" />
    </>
  ),
  Edge: (
    <>
      <circle cx="12" cy="12" r="10" fill="#1a78cf" />
      <path d="M2 12C2 0 22-1 22 11c0 4-5 5-8 4 2-3 0-7-4-7-3 0-7 2-8 4z" fill="#4fc9a5" />
      <path d="M10 8c-6 1-4 12 5 13-7 3-14-3-13-9 1-3 5-4 8-4z" fill="#2197dd" />
      <path d="M10 10c-2 4 2 9 10 7-2 3-5 4-7 4-6-2-7-8-3-11z" fill="#0d4a93" />
    </>
  ),
  Mail: (
    <>
      <path d="M2 9l10-6 10 6v12H2z" fill="#1268b8" />
      <path d="M4 7h16v9H4z" fill="#e9f2f9" />
      <path d="M2 9l10 7 10-7v12H2z" fill="#35a3e8" />
      <path d="M2 21l10-7 10 7z" fill="#2187d4" />
    </>
  ),
  Community: (
    <>
      <rect x="2" y="2" width="20" height="20" rx="3" fill="#fff" />
      <path d="M12 7v6M12 12l-5 4M12 12l5 4" stroke="#e3a24c" strokeWidth="3" />
      <circle cx="12" cy="6.5" r="2.5" fill="#eaa72b" />
      <circle cx="7" cy="17" r="3" fill="#2266c8" />
      <circle cx="17" cy="17" r="3" fill="#e2492a" />
    </>
  ),
  Chrome: (
    <>
      <circle cx="12" cy="12" r="10" fill="#34a853" />
      <path d="M20.700 7A10 10 0 0 1 12 22l5-9-5-6z" fill="#fbbc05" />
      <path d="M3.300 7A10 10 0 0 1 20.700 7H12v5z" fill="#ea4335" />
      <circle cx="12" cy="12" r="4.8" fill="#fff" />
      <circle cx="12" cy="12" r="3.8" fill="#4285f4" />
    </>
  ),
  OneDrive: (
    <>
      <path d="M5 18c-5-1-4-7 1-7 2-6 10-6 12 0 5 0 5 6 1 7z" fill="#1b86d8" />
      <path d="M3 11c3-6 11-6 13-1l-9 6c-5 0-6-2-4-5z" fill="#1160b3" />
    </>
  ),
  "3D Viewer": (
    <>
      <path d="M3 3v17h19M6 3v1" fill="none" stroke="#2aa4b5" strokeWidth="1.3" />
      <path d="M5 4h16v14H5z" fill="#14505c" />
      <text x="13" y="16" textAnchor="middle" fontSize="10" fontWeight="700" fontFamily="Liberation Sans, sans-serif" fill="#fff">3D</text>
    </>
  ),
  CATIA: (
    <>
      <path d="M2.500 2.500h19v19h-19z" fill="#0b1017" stroke="#e8eef2" />
      <path d="M3 6l7 3 2 11-5-4-4-5z" fill="#3777c2" />
      <path d="M5 4h5l4 5-1 8-4-6z" fill="#cfe6f2" />
      <path d="M10 6l6 3 1 5-3 6-2-6z" fill="#e98b34" />
      <path d="M14 7l4-2 2 5-3 2z" fill="#59230f" />
    </>
  ),
  VLC: (
    <>
      <path d="M10 3h4l4 14H6z" fill="#f28a1c" />
      <path d="M9 8h6l1 4H8z" fill="#f3f1ed" />
      <path d="M4 16h16l2 5H2z" fill="#e87a12" />
      <path d="M7 15h10l1 3H6z" fill="#f7a94a" />
    </>
  ),
};

function Flowers() {
  return (
    <svg viewBox="0 0 46 31" className="ml-auto h-[31px] w-[46px]" aria-hidden="true">
      <path d="M2 4l10 6M2 9l9 2M4 1l5 8M9 1l2 7M3 26l9-3M4 29l8-5M9 30l4-6" stroke="#5d8147" strokeWidth="2" />
      <path d="M30 21l11 9M32 20l12 7M33 18l11 5M29 23l8 7" stroke="#6d8a3c" strokeWidth="1.500" />
      <path d="M12 6l6-4 8 2 6 6 1 9-6 6-10 1-7-6z" fill="#f2a04f" />
      <circle cx="17" cy="8" r="5" fill="#f6b876" />
      <circle cx="26" cy="9" r="5" fill="#f08a76" />
      <circle cx="14" cy="18" r="6" fill="#f7b54a" />
      <circle cx="26" cy="19" r="6" fill="#f59a55" />
      <circle cx="21" cy="14" r="3" fill="#fbd39a" />
      <circle cx="14" cy="18" r="2" fill="#fddc9c" />
    </svg>
  );
}

const TRAY = [
  ["Show hidden icons", <path d="M4 13l5-5 5 5" />],
  ["Meet now", <path d="M5 6h8v8H5zM7 4h4M7 16h4M13 9l3-2v6l-3-2" />],
  [
    "Sync",
    <>
      <path d="M3 5l10-2v11H3zM7 7h3M6 10h5" />
      <circle cx="14" cy="14" r="3" fill="#f09a2d" stroke="none" />
    </>,
  ],
  [
    "Battery",
    <>
      <path d="M2 6h13v7H2zM16 8v3" />
      <path d="M3 7h6v5H3z" fill="#fff" />
    </>,
  ],
  ["Volume", <path d="M2 7h3l3-3v10l-3-3H2zM10 7c1 1 1 3 0 4M12 5c2 2 2 6 0 8M14 3c3 3 3 9 0 12" />],
];

function TaskBar() {
  return (
    <footer className="flex h-[33px] shrink-0 items-stretch bg-gradient-to-r from-[#22393e] to-[#172c42] font-['Noto_Sans',sans-serif] text-white">
      <button type="button" aria-label="Start" className="flex w-10 items-center justify-center">
        <svg viewBox="0 0 14 14" className="h-[14px] w-[14px]">
          <path d="M0 2l6-1v5.500H0zM7 1l7-1v6.500H7zM0 7.500h6V13l-6-1zM7 7.500h7V14l-7-1z" fill="#fff" />
        </svg>
      </button>
      <label className="flex w-[286px] items-center bg-[#eff4ef] pl-[10px] pr-[6px]">
        <svg viewBox="0 0 14 14" className="h-[14px] w-[14px] shrink-0" aria-hidden="true">
          <circle cx="8.5" cy="5.5" r="4.5" fill="none" stroke="#222" strokeWidth="1.2" />
          <path d="M5 9l-4 4" stroke="#222" strokeWidth="1.2" />
        </svg>
        <input
          aria-label="Search"
          placeholder="Type here to search"
          className="ml-[9px] w-40 bg-transparent text-[12px] outline-none placeholder:text-[#3b3d40]"
        />
        <Flowers />
      </label>
      <div className="grid w-[496px] grid-cols-12">
        {Object.entries(APPS).map(([name, art]) => (
          <button
            key={name}
            type="button"
            aria-label={name}
            className={`flex items-center justify-center border-b-2 pt-0.5 ${
              name === "CATIA" ? "border-[#76b9ed] bg-[#46595f]" : name === "VLC" ? "border-[#76b9ed]" : "border-transparent"
            }`}
          >
            <svg viewBox="0 0 24 24" className="h-[23px] w-[23px]">
              {art}
            </svg>
          </button>
        ))}
      </div>
      <div className="ml-auto flex items-center">
        <button type="button" aria-label="Help" className="mr-[53px]">
          <svg viewBox="0 0 20 20" className="h-5 w-5">
            <circle cx="10" cy="10" r="8.5" fill="#1b8fd2" stroke="#eaf5fb" strokeWidth="1.8" />
            <path d="M7 8c0-4 6-4 6 0 0 2-3 2-3 4M10 14v2" fill="none" stroke="#fff" strokeWidth="2" />
          </svg>
        </button>
        <button type="button" aria-label="News" className="mr-3">
          <svg viewBox="0 0 20 14" className="h-[14px] w-5">
            <path d="M1 1h15v12H1zM16 4h3v9h-3M4 4h4v3H4zM10 4h4M10 7h4M4 10h10" fill="none" stroke="#fff" strokeWidth="1.3" />
          </svg>
        </button>
        {TRAY.map(([label, art]) => (
          <button key={label} type="button" aria-label={label} className="flex w-[19px] justify-center">
            <svg viewBox="0 0 18 18" className="h-4 w-4" fill="none" stroke="#e8edf1" strokeWidth="1.3">
              {art}
            </svg>
          </button>
        ))}
        <span className="ml-[6px] text-[10px]">ENG</span>
        <time className="ml-[10px] whitespace-nowrap text-center text-[10px] leading-4">
          22:46
          <br />
          16-06-2023
        </time>
        <button type="button" aria-label="6 notifications" className="ml-[15px] mr-3">
          <svg viewBox="0 0 22 20" className="h-5 w-[22px]">
            <path d="M1 1h15v12H8l-3 3v-3H1z" fill="#fff" />
            <path d="M4 5h9M4 8h9" stroke="#1a2c3c" />
            <circle cx="15" cy="13" r="6" fill="#4a5a68" stroke="#1a2c3c" />
            <text x="15" y="17" textAnchor="middle" fontSize="10" fontFamily="Noto Sans, sans-serif" fill="#fff">6</text>
          </svg>
        </button>
      </div>
    </footer>
  );
}

export default function App() {
  return (
    <div className="relative flex h-screen min-w-[1200px] flex-col overflow-hidden border-r border-black bg-[#cdd1e4]">
      <TitleBar />
      <MenuBar />
      <div className="flex min-h-0 flex-1">
        <main className="relative flex-1 border-l border-black bg-[linear-gradient(180deg,#31356a_0%,#3a406d_35%,#444b78_62%,#6a7093_80%,#a3a7bb_100%)]">
          <SpecTree />
          <div className="absolute inset-0 flex items-center justify-center">
            <PartModel />
          </div>
          <Compass />
          <ScreenAxis />
        </main>
        <SideBar />
      </div>
      <BottomBar />
      <StatusBar />
      <TaskBar />

      <Palette
        title="S"
        className="right-[41px] top-[148px]"
        tools={["pad+", "pocket+", "shaft", "groove", "hole", "rib", "slot", "combine+", "loft", "removedLoft"]}
      />
      <Palette
        title="D"
        className="right-[86px] top-[306px]"
        tools={["fillet+", "chamfer", "draft+", "shell", "thickness", "thread", "removeFace+"]}
      />
      <Palette title="T" className="right-[59px] top-[538px]" tools={["translate+", "mirror", "pattern+", "scale+"]} />
    </div>
  );
}
